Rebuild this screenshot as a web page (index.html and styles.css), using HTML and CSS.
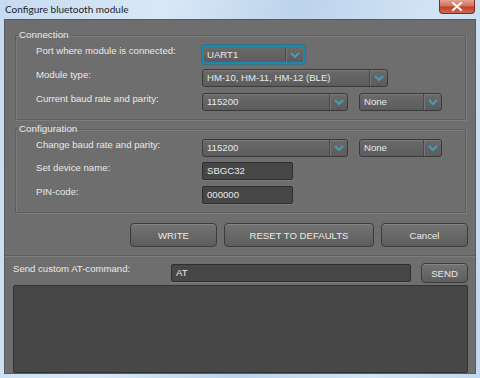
FILE: index.html
```html
<!DOCTYPE html>
<html>
<head>
<meta charset="utf-8">
<link rel="stylesheet" href="styles.css">
</head>
<body>
<div class="window">
  <div class="titlebar">
    <span class="title">Configure bluetooth module</span>
    <span class="close"><svg width="12" height="9" viewBox="0 0 12 9"><path d="M2 1 L10 8 M10 1 L2 8" stroke="#fff" stroke-width="2.2" stroke-linecap="round"/></svg></span>
  </div>
  <div class="client">
    <fieldset class="group conn">
      <legend>Connection</legend>
      <div class="row">
        <span class="lbl">Port where module is connected:</span>
        <div class="combo focus w-port"><span class="val">UART1</span><span class="arrow"><svg width="10" height="6" viewBox="0 0 10 6"><path d="M1 1 L5 5 L9 1" fill="none" stroke="#4a9cb6" stroke-width="2"/></svg></span></div>
      </div>
      <div class="row">
        <span class="lbl">Module type:</span>
        <div class="combo w-mod"><span class="val">HM-10, HM-11, HM-12 (BLE)</span><span class="arrow"><svg width="10" height="6" viewBox="0 0 10 6"><path d="M1 1 L5 5 L9 1" fill="none" stroke="#4a9cb6" stroke-width="2"/></svg></span></div>
      </div>
      <div class="row">
        <span class="lbl">Current baud rate and parity:</span>
        <div class="combo w-baud"><span class="val">115200</span><span class="arrow"><svg width="10" height="6" viewBox="0 0 10 6"><path d="M1 1 L5 5 L9 1" fill="none" stroke="#4a9cb6" stroke-width="2"/></svg></span></div>
        <div class="combo w-none"><span class="val">None</span><span class="arrow"><svg width="10" height="6" viewBox="0 0 10 6"><path d="M1 1 L5 5 L9 1" fill="none" stroke="#4a9cb6" stroke-width="2"/></svg></span></div>
      </div>
    </fieldset>
    <fieldset class="group conf">
      <legend>Configuration</legend>
      <div class="row">
        <span class="lbl">Change baud rate and parity:</span>
        <div class="combo w-baud"><span class="val">115200</span><span class="arrow"><svg width="10" height="6" viewBox="0 0 10 6"><path d="M1 1 L5 5 L9 1" fill="none" stroke="#4a9cb6" stroke-width="2"/></svg></span></div>
        <div class="combo w-none"><span class="val">None</span><span class="arrow"><svg width="10" height="6" viewBox="0 0 10 6"><path d="M1 1 L5 5 L9 1" fill="none" stroke="#4a9cb6" stroke-width="2"/></svg></span></div>
      </div>
      <div class="row">
        <span class="lbl">Set device name:</span>
        <div class="edit w-edit">SBGC32</div>
      </div>
      <div class="row last">
        <span class="lbl">PIN-code:</span>
        <div class="edit w-edit">000000</div>
      </div>
    </fieldset>
    <div class="buttons">
      <div class="btn w-btn">WRITE</div>
      <div class="btn w-reset">RESET TO DEFAULTS</div>
      <div class="btn w-btn">Cancel</div>
    </div>
    <div class="sep"></div>
    <div class="sendrow">
      <span class="sendlbl">Send custom AT-command:</span>
      <div class="edit w-cmd">AT</div>
      <div class="btn w-send">SEND</div>
    </div>
    <div class="output"></div>
  </div>
</div>
</body>
</html>
```
FILE: styles.css
```css
html, body {
  margin: 0;
  padding: 0;
}
body {
  width: 480px;
  height: 378px;
  overflow: hidden;
  font-family: "Liberation Sans", Arial, sans-serif;
  font-size: 9.6px;
  color: #e9e9e9;
}
.window {
  width: 480px;
  height: 378px;
  box-sizing: border-box;
  padding: 0 4px 4px 4px;
  background: linear-gradient(100deg, #c6dbf1 0%, #d9e8f6 30%, #bcd3ec 55%, #d3e4f5 80%, #c2d8ef 100%);
  display: flex;
  flex-direction: column;
}
.titlebar {
  height: 19px;
  display: flex;
  align-items: flex-start;
  justify-content: space-between;
  flex: none;
}
.title {
  font-family: Lato, "Noto Sans", sans-serif;
  font-size: 10px;
  color: #1e1e1e;
  padding: 3px 0 0 1px;
  line-height: 13px;
}
.close {
  width: 36px;
  height: 14px;
  box-sizing: border-box;
  margin-right: 1px;
  border: 1px solid #7a2b22;
  border-top: none;
  border-radius: 0 0 4px 4px;
  background: linear-gradient(#e8a393 0%, #d3705c 45%, #c0432c 55%, #cf6a52 100%);
  display: flex;
  align-items: center;
  justify-content: center;
}
.client {
  flex: 1;
  background: #6e6e6e;
  border: 1px solid #5a5a5a;
  display: flex;
  flex-direction: column;
  padding: 0 6px 0 10px;
}
.group {
  margin: 9px 3px 0 0;
  padding: 4px 0 8px 20px;
  border: 1px solid #5e5e5e;
  box-shadow: inset 1px 1px 0 #7c7c7c, 1px 1px 0 #7c7c7c;
  min-width: 0;
  display: flex;
  flex-direction: column;
}
.group legend {
  padding: 0 1px;
  margin-left: -18px;
  line-height: 12px;
  font-size: 9.8px;
}
.conf {
  margin-top: 3px;
  gap: 5px;
}
.row {
  display: flex;
  align-items: flex-start;
}
.conn .row {
  height: 24px;
}
.conn .row:last-child {
  height: 18px;
}
.conf .row.last {
  margin-top: 1px;
}
.lbl {
  width: 166px;
  flex: none;
  line-height: 12px;
  margin-top: 0;
}
.combo {
  height: 18px;
  box-sizing: border-box;
  border: 1px solid #3a3a3a;
  border-radius: 3px;
  background: linear-gradient(#6a6a6a, #5c5c5c);
  box-shadow: inset 0 1px 0 #7a7a7a;
  display: flex;
  align-items: center;
}
.combo.focus {
  height: 19px;
  border: 2px solid #1f86ad;
  box-shadow: 0 0 0 1px #3b6f82;
}
.combo .val {
  flex: 1;
  padding-left: 4px;
  line-height: 14px;
  white-space: nowrap;
  overflow: hidden;
}
.combo.focus .val {
  padding-left: 3px;
}
.combo .arrow {
  width: 17px;
  height: 100%;
  border-left: 1px solid #4a4a4a;
  box-shadow: inset 1px 0 0 #767676;
  display: flex;
  align-items: center;
  justify-content: center;
}
.w-port { width: 103px; }
.w-mod { width: 186px; }
.w-baud { width: 146px; }
.w-none { width: 83px; margin-left: 11px; }
.edit {
  height: 18px;
  box-sizing: border-box;
  border: 1px solid #2e2e2e;
  border-radius: 2px;
  background: #474747;
  box-shadow: 0 1px 0 #7e7e7e;
  padding-left: 4px;
  line-height: 16px;
}
.w-edit { width: 91px; }
.buttons {
  display: flex;
  justify-content: flex-end;
  gap: 7px;
  margin-top: 10px;
  padding-right: 1px;
}
.btn {
  height: 24px;
  box-sizing: border-box;
  border: 1px solid #3c3c3c;
  border-radius: 4px;
  background: linear-gradient(#737373, #5d5d5d);
  box-shadow: inset 0 1px 0 #858585;
  display: flex;
  align-items: center;
  justify-content: center;
}
.w-btn { width: 87px; }
.w-reset { width: 150px; }
.sep {
  height: 1px;
  background: #5e5e5e;
  box-shadow: 0 1px 0 #7c7c7c;
  margin: 8px -6px 0 -10px;
}
.sendrow {
  display: flex;
  align-items: flex-start;
  margin-top: 7px;
  padding-right: 1px;
}
.sendlbl {
  width: 158px;
  flex: none;
  margin-left: -2px;
  line-height: 12px;
  margin-top: 0;
}
.w-cmd {
  width: 240px;
  height: 18px;
  margin-top: 1px;
}
.w-send {
  width: 47px;
  height: 20px;
  margin-left: 10px;
}
.output {
  margin: 2px 1px 0 -2px;
  flex: 1;
  background: #474747;
  border: 1px solid #333333;
  border-radius: 2px;
}
```
